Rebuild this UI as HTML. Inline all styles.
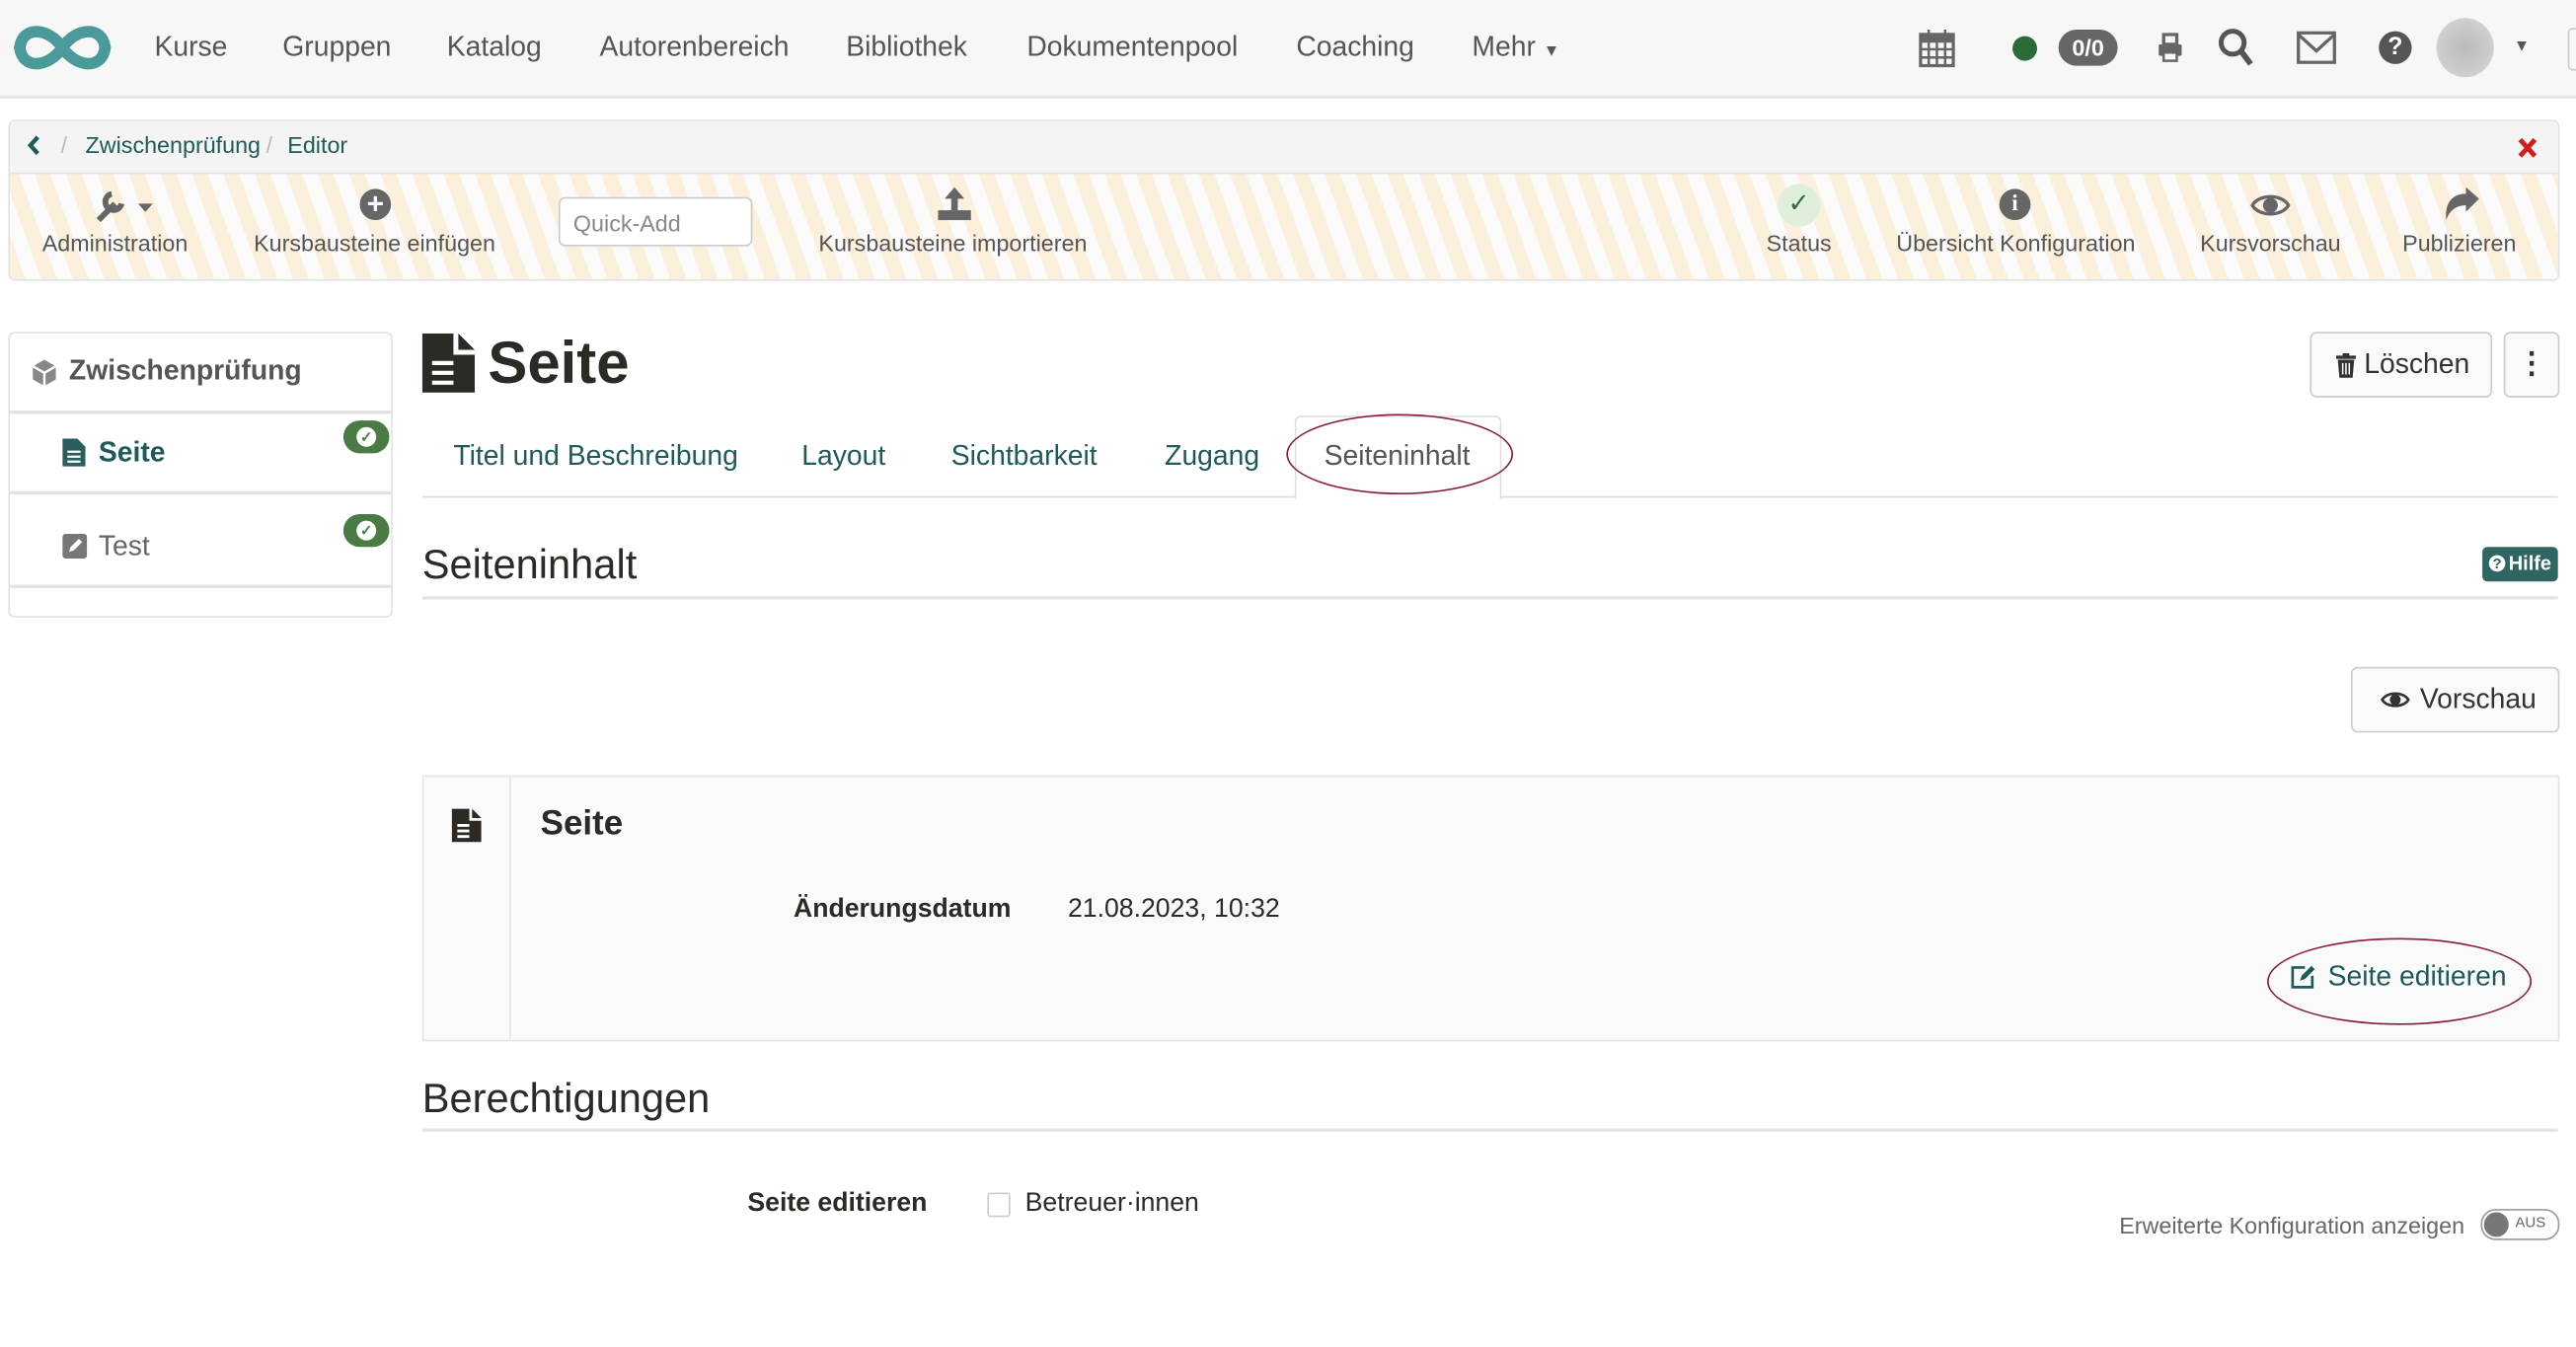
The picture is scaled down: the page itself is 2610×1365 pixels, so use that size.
<!DOCTYPE html>
<html><head><meta charset="utf-8">
<style>
html,body{margin:0;padding:0;background:#fff;overflow:hidden}
body{width:2610px;height:1364px}
#w{position:absolute;left:0;top:0;width:1568px;height:820px;transform:scale(1.66454);transform-origin:0 0;font-family:"Liberation Sans",sans-serif;color:#333}
.a{position:absolute;white-space:nowrap}
.nav{font-size:17px;color:#555;top:19px}
.tl{font-size:14px;color:#555;top:140px;transform:translateX(-50%)}
.tab{font-size:17px;color:#1f5a5a;top:268px}
.btn{position:absolute;border:1px solid #ccc;border-radius:4px;background:#fafafa}
.teal{color:#1f5a5a}
</style></head><body><div id="w">
<!-- nav -->
<div class="a" style="left:0;top:0;width:1568px;height:58px;background:#f7f7f7;border-bottom:2px solid #e6e6e6"></div>
<svg class="a" style="left:6px;top:12px" width="64" height="34" viewBox="0 0 64 34"><path d="M32 17 C24 5 8 3 6 17 C8 31 24 29 32 17 C40 5 56 3 58 17 C56 31 40 29 32 17Z" fill="none" stroke="#4a9a9a" stroke-width="7"/></svg>
<div class="a nav" style="left:94px">Kurse</div>
<div class="a nav" style="left:172px">Gruppen</div>
<div class="a nav" style="left:272px">Katalog</div>
<div class="a nav" style="left:365px">Autorenbereich</div>
<div class="a nav" style="left:515px">Bibliothek</div>
<div class="a nav" style="left:625px">Dokumentenpool</div>
<div class="a nav" style="left:789px">Coaching</div>
<div class="a nav" style="left:896px">Mehr <span style="font-size:10px">▼</span></div>
<svg class="a" style="left:1168px;top:17px" width="22" height="24" viewBox="0 0 22 24"><rect x="1" y="4" width="20" height="19" fill="none" stroke="#666" stroke-width="2"/><rect x="1" y="4" width="20" height="5" fill="#666"/><path d="M6 1v6M16 1v6M1 13h20M1 18h20M6 9v14M11 9v14M16 9v14" stroke="#666" stroke-width="1.5"/></svg>
<div class="a" style="left:1225px;top:22px;width:15px;height:15px;border-radius:50%;background:#2b6b38"></div>
<div class="a" style="left:1253px;top:18px;width:36px;height:22px;border-radius:11px;background:#666;color:#fff;font-size:14px;font-weight:bold;text-align:center;line-height:22px">0/0</div>
<svg class="a" style="left:1313px;top:20px" width="16" height="18" viewBox="0 0 16 18"><rect x="4" y="1" width="8" height="6" fill="none" stroke="#666" stroke-width="2"/><rect x="1" y="7" width="14" height="7" rx="1" fill="#666"/><rect x="4" y="12" width="8" height="5" fill="#fff" stroke="#666" stroke-width="1.5"/></svg>
<svg class="a" style="left:1350px;top:17px" width="22" height="24" viewBox="0 0 22 24"><circle cx="9" cy="9" r="7" fill="none" stroke="#555" stroke-width="3"/><path d="M14 14l6 8" stroke="#555" stroke-width="3.5"/></svg>
<svg class="a" style="left:1398px;top:19px" width="24" height="20" viewBox="0 0 24 20"><rect x="1" y="1" width="22" height="18" fill="none" stroke="#666" stroke-width="2"/><path d="M1 2l11 10 11-10" fill="none" stroke="#666" stroke-width="2"/></svg>
<div class="a" style="left:1448px;top:19px;width:20px;height:20px;border-radius:50%;background:#555;color:#fff;font-weight:bold;font-size:15px;text-align:center;line-height:20px">?</div>
<div class="a" style="left:1483px;top:11px;width:35px;height:36px;border-radius:50%;background:radial-gradient(#bbb,#ccc 60%,#ddd)"></div>
<div class="a" style="left:1530px;top:23px;font-size:10px;color:#555">▼</div>
<div class="a" style="left:1563px;top:17px;width:8px;height:24px;border:1px solid #ccc;border-radius:3px"></div>
<!-- breadcrumb toolbar -->
<div class="a" style="left:5px;top:73px;width:1551px;height:96px;border:1px solid #e3e3e3;border-radius:4px;overflow:hidden">
 <div style="height:31px;background:#f4f4f4;border-bottom:1px solid #e3e3e3"></div>
 <div style="height:64px;background:repeating-linear-gradient(70deg,#fcefdb 0 9px,#fafafa 9px 18px)"></div>
</div>
<svg class="a" style="left:16px;top:82px" width="9" height="13" viewBox="0 0 9 13"><path d="M7 1.5L2.5 6.5 7 11.5" fill="none" stroke="#1f5a5a" stroke-width="2.6"/></svg>
<div class="a" style="left:37px;top:80px;font-size:14px;color:#bbb">/</div>
<div class="a teal" style="left:52px;top:80px;font-size:14px">Zwischenprüfung</div>
<div class="a" style="left:162px;top:80px;font-size:14px;color:#bbb">/</div>
<div class="a teal" style="left:175px;top:80px;font-size:14px">Editor</div>
<svg class="a" style="left:1532px;top:83px" width="13" height="14" viewBox="0 0 13 14"><path d="M2 2l9 10M11 2l-9 10" stroke="#d21e1e" stroke-width="3"/></svg>
<svg class="a" style="left:57px;top:114px" width="40" height="22" viewBox="0 0 40 22"><path d="M3 20l10-10M11 4a5 5 0 1 0 6 6" stroke="#666" stroke-width="3.5" fill="none"/><path d="M27 10h9l-4.5 5z" fill="#666"/></svg>
<div class="a tl" style="left:70px">Administration</div>
<div class="a" style="left:219px;top:115px;width:19px;height:19px;border-radius:50%;background:#666;color:#fff;font-weight:bold;font-size:18px;line-height:19px;text-align:center">+</div>
<div class="a tl" style="left:228px">Kursbausteine einfügen</div>
<div class="a" style="left:340px;top:120px;width:118px;height:30px;border:1px solid #ccc;border-radius:4px;background:#fff;font-size:14px;color:#888;line-height:30px;padding-left:8px;box-sizing:border-box">Quick-Add</div>
<svg class="a" style="left:570px;top:113px" width="22" height="22" viewBox="0 0 22 22"><path d="M11 1l6 7h-4v7h-4V8H5z" fill="#666"/><rect x="1" y="15" width="20" height="6" fill="#666"/></svg>
<div class="a tl" style="left:580px">Kursbausteine importieren</div>
<div class="a" style="left:1082px;top:112px;width:26px;height:26px;border-radius:50%;background:#e0eedc;color:#2e6b38;font-size:16px;text-align:center;line-height:26px">✓</div>
<div class="a tl" style="left:1095px">Status</div>
<div class="a" style="left:1217px;top:115px;width:19px;height:19px;border-radius:50%;background:#666;color:#fff;font-weight:bold;font-size:14px;line-height:19px;text-align:center;font-family:'Liberation Serif',serif">i</div>
<div class="a tl" style="left:1227px">Übersicht Konfiguration</div>
<svg class="a" style="left:1370px;top:117px" width="24" height="16" viewBox="0 0 24 16"><path d="M1 8C5 1 19 1 23 8C19 15 5 15 1 8Z" fill="none" stroke="#666" stroke-width="2"/><circle cx="12" cy="8" r="4.5" fill="#666"/></svg>
<div class="a tl" style="left:1382px">Kursvorschau</div>
<svg class="a" style="left:1486px;top:113px" width="24" height="22" viewBox="0 0 24 22"><path d="M23 8L15 1v4C7 5 2 10 3 21c2-6 6-9 12-9v4z" fill="#666"/></svg>
<div class="a tl" style="left:1497px">Publizieren</div>
<!-- sidebar -->
<div class="a" style="left:5px;top:202px;width:232px;height:172px;border:1px solid #e3e3e3;border-radius:4px"></div>
<div class="a" style="left:6px;top:250px;width:232px;height:2px;background:#e3e3e3"></div>
<div class="a" style="left:6px;top:299px;width:232px;height:2px;background:#e3e3e3"></div>
<div class="a" style="left:6px;top:356px;width:232px;height:2px;background:#e3e3e3"></div>
<svg class="a" style="left:19px;top:218px" width="16" height="18" viewBox="0 0 16 18"><path d="M8 1l7 4v8l-7 4-7-4V5z" fill="#888"/><path d="M1 5l7 4 7-4M8 9v8" stroke="#fff" stroke-width="1.5" fill="none"/></svg>
<div class="a" style="left:42px;top:216px;font-size:17px;font-weight:bold;color:#555">Zwischenprüfung</div>
<svg class="a" style="left:38px;top:267px" width="14" height="17" viewBox="0 0 14 17"><path d="M0 0h9l5 5v12H0z" fill="#2a5d5d"/><path d="M3 8h8M3 11h8M3 14h8" stroke="#fff" stroke-width="1.3"/></svg>
<div class="a teal" style="left:60px;top:266px;font-size:17px;font-weight:bold">Seite</div>
<svg class="a" style="left:38px;top:325px" width="15" height="15" viewBox="0 0 15 15"><rect width="15" height="15" rx="2" fill="#777"/><path d="M4 11l1-3 5-5 2 2-5 5z" fill="#fff"/></svg>
<div class="a" style="left:60px;top:323px;font-size:17px;color:#666">Test</div>
<div class="a" style="left:209px;top:256px;width:28px;height:20px;border-radius:10px;background:#4a7b45"><div style="margin:4px auto;width:12px;height:12px;border-radius:50%;background:#fff;color:#4a7b45;font-size:9px;text-align:center;line-height:12px;font-weight:bold">✓</div></div>
<div class="a" style="left:209px;top:313px;width:28px;height:20px;border-radius:10px;background:#4a7b45"><div style="margin:4px auto;width:12px;height:12px;border-radius:50%;background:#fff;color:#4a7b45;font-size:9px;text-align:center;line-height:12px;font-weight:bold">✓</div></div>
<!-- title -->
<svg class="a" style="left:257px;top:203px" width="32" height="36" viewBox="0 0 32 36"><path d="M0 0h19l0 13h13v23H0z" fill="#2d2a26"/><path d="M22 0l10 10H22z" fill="#2d2a26"/><path d="M6 18h13M6 24h13M6 30h13" stroke="#fff" stroke-width="2.5"/></svg>
<div class="a" style="left:297px;top:200px;font-size:36px;font-weight:bold;color:#2d2a26">Seite</div>
<div class="btn" style="left:1406px;top:202px;width:109px;height:38px;font-size:17px;color:#333;line-height:38px">
 <svg style="position:absolute;left:15px;top:12px" width="12" height="15" viewBox="0 0 12 15"><rect x="0" y="1.5" width="12" height="2" fill="#333"/><rect x="4" y="0" width="4" height="2" fill="#333"/><path d="M1 4h10l-1 11H2z" fill="#333"/><path d="M4 6v7M6 6v7M8 6v7" stroke="#fff" stroke-width="0.9"/></svg>
 <span style="position:absolute;left:32px">Löschen</span></div>
<div class="btn" style="left:1524px;top:202px;width:32px;height:38px;font-size:18px;font-weight:bold;line-height:36px;text-align:center">⋮</div>
<!-- tabs -->
<div class="a" style="left:257px;top:302px;width:1300px;height:1px;background:#ddd"></div>
<div class="a" style="left:788px;top:253px;width:124px;height:50px;border:1px solid #ddd;border-bottom:none;background:#fff;border-radius:4px 4px 0 0"></div>
<div class="a tab" style="left:276px">Titel und Beschreibung</div>
<div class="a tab" style="left:488px">Layout</div>
<div class="a tab" style="left:579px">Sichtbarkeit</div>
<div class="a tab" style="left:709px">Zugang</div>
<div class="a tab" style="left:806px;color:#555">Seiteninhalt</div>
<div class="a" style="left:783px;top:252px;width:136px;height:47px;border:1.5px solid #8b1a3c;border-radius:50%"></div>
<!-- Seiteninhalt -->
<div class="a" style="left:257px;top:330px;font-size:25px;color:#2d2a26">Seiteninhalt</div>
<div class="a" style="left:257px;top:363px;width:1300px;height:2px;background:#e5e5e5"></div>
<div class="a" style="left:1511px;top:333px;width:46px;height:21px;background:#2f6661;border-radius:3px;color:#fff;font-size:12px;font-weight:bold;line-height:21px">
 <span style="position:absolute;left:4px;top:5px;width:10px;height:10px;border-radius:50%;background:#fff;color:#2f6661;font-size:9px;line-height:10px;text-align:center">?</span>
 <span style="position:absolute;left:16px">Hilfe</span></div>
<div class="btn" style="left:1431px;top:406px;width:125px;height:38px;font-size:17px;line-height:38px">
 <svg style="position:absolute;left:17px;top:13px" width="18" height="12" viewBox="0 0 18 12"><path d="M1 6C4 1 14 1 17 6C14 11 4 11 1 6Z" fill="none" stroke="#333" stroke-width="1.6"/><circle cx="9" cy="6" r="3.3" fill="#333"/></svg>
 <span style="position:absolute;left:41px">Vorschau</span></div>
<!-- panel -->
<div class="a" style="left:257px;top:472px;width:1299px;height:160px;border:1px solid #e5e5e5;background:#fafafa"></div>
<div class="a" style="left:310px;top:473px;width:1px;height:160px;background:#e5e5e5"></div>
<svg class="a" style="left:275px;top:492px" width="18" height="21" viewBox="0 0 32 36"><path d="M0 0h19l0 13h13v23H0z" fill="#2d2a26"/><path d="M22 0l10 10H22z" fill="#2d2a26"/><path d="M6 18h13M6 24h13M6 30h13" stroke="#fff" stroke-width="3"/></svg>
<div class="a" style="left:329px;top:490px;font-size:21px;color:#2d2a26;font-weight:bold">Seite</div>
<div class="a" style="left:483px;top:545px;font-size:16px;font-weight:bold;color:#2d2a26">Änderungsdatum</div>
<div class="a" style="left:650px;top:545px;font-size:16px;color:#2d2a26">21.08.2023, 10:32</div>
<svg class="a" style="left:1394px;top:587px" width="16" height="15" viewBox="0 0 16 15"><path d="M9 2H1.5v12h12V7" fill="none" stroke="#1f5a5a" stroke-width="1.6"/><path d="M6 10l1-3 6-6 2 2-6 6z" fill="#1f5a5a"/></svg>
<div class="a teal" style="left:1417px;top:585px;font-size:17px">Seite editieren</div>
<div class="a" style="left:1380px;top:571px;width:159px;height:51px;border:1.5px solid #8b1a3c;border-radius:50%"></div>
<!-- Berechtigungen -->
<div class="a" style="left:257px;top:655px;font-size:25px;color:#2d2a26">Berechtigungen</div>
<div class="a" style="left:257px;top:687px;width:1300px;height:2px;background:#e5e5e5"></div>
<div class="a" style="left:455px;top:724px;font-size:16px;font-weight:bold;color:#2d2a26">Seite editieren</div>
<div class="a" style="left:601px;top:726px;width:12px;height:13px;border:1px solid #ccc;border-radius:2px;background:#fff"></div>
<div class="a" style="left:624px;top:724px;font-size:16px;color:#2d2a26">Betreuer·innen</div>
<div class="a" style="left:1290px;top:738px;font-size:14px;color:#666">Erweiterte Konfiguration anzeigen</div>
<div class="a" style="left:1510px;top:736px;width:46px;height:17px;border:1px solid #999;border-radius:9px;background:#fff"><div style="position:absolute;left:1px;top:1px;width:15px;height:15px;border-radius:50%;background:#777"></div><div style="position:absolute;left:20px;top:2px;font-size:9px;color:#666">AUS</div></div>
</div></body></html>
